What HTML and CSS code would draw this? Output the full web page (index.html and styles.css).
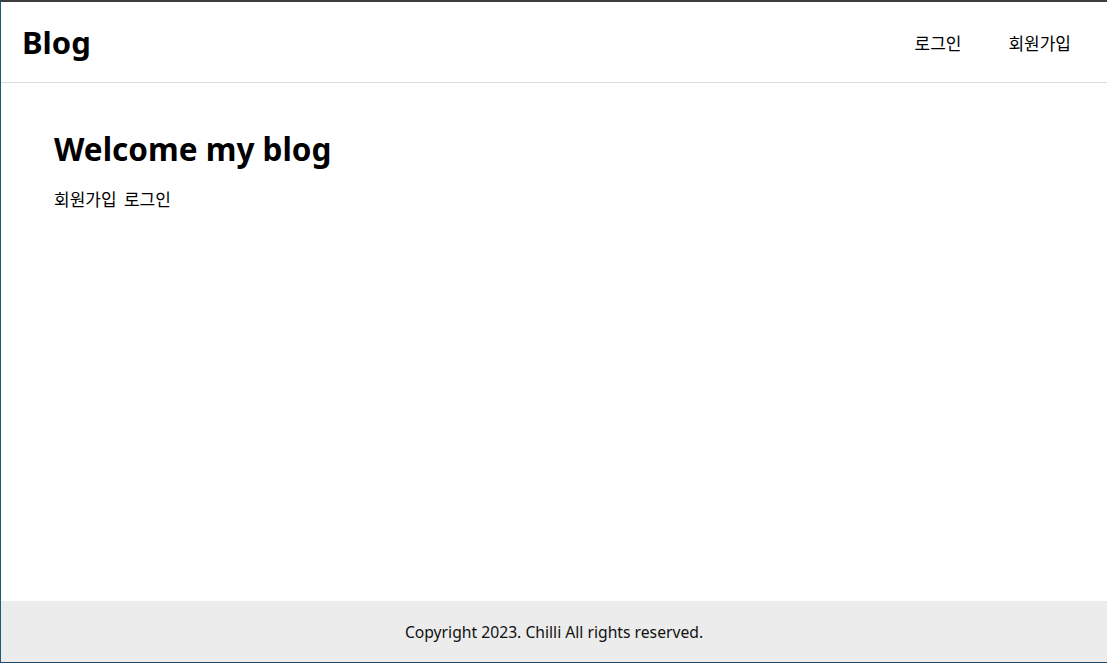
FILE: index.html
```html
<!DOCTYPE html>
<html lang="ko">
<head>
<meta charset="utf-8">
<title>Blog</title>
<link rel="stylesheet" href="styles.css">
</head>
<body>
<div class="frame">
  <header class="site-header">
    <a class="logo" href="#">Blog</a>
    <nav class="nav">
      <a href="#">로그인</a>
      <a href="#">회원가입</a>
    </nav>
  </header>
  <main class="content">
    <h1 class="title">Welcome my blog</h1>
    <p class="links"><a href="#">회원가입</a> <a href="#">로그인</a></p>
  </main>
  <footer class="site-footer">
    <p>Copyright 2023. Chilli All rights reserved.</p>
  </footer>
</div>
</body>
</html>
```
FILE: styles.css
```css
* { box-sizing: border-box; }
html, body { margin: 0; padding: 0; }
body {
  font-family: "Noto Sans", "Noto Sans CJK KR", sans-serif;
  font-size: 16px;
  color: #000;
  background: #fff;
}
a { color: inherit; text-decoration: none; }
.frame {
  height: 100vh;
  display: flex;
  flex-direction: column;
  border-top: 2px solid #3d3d3d;
  border-left: 1px solid #1b5b7a;
  border-bottom: 1px solid #1c4a6e;
}
.site-header {
  height: 81px;
  flex: none;
  display: flex;
  align-items: center;
  justify-content: space-between;
  padding: 0 36px 0 21px;
  border-bottom: 1px solid #dcdcdc;
}
.logo {
  font-size: 31px;
  font-weight: 700;
  line-height: 1;
}
.nav {
  display: flex;
  gap: 47px;
}
.nav a { font-size: 17px; }
.content {
  flex: 1;
  padding: 44px 53px;
}
.title {
  margin: 0;
  font-size: 31.5px;
  font-weight: 700;
  line-height: 44px;
}
.links {
  margin: 15px 0 0;
  font-size: 17px;
  word-spacing: 3px;
}
.site-footer {
  flex: none;
  height: 61px;
  background: #ececec;
  display: flex;
  align-items: center;
  justify-content: center;
}
.site-footer p {
  margin: 0;
  font-size: 15.7px;
  color: #111;
}
```
